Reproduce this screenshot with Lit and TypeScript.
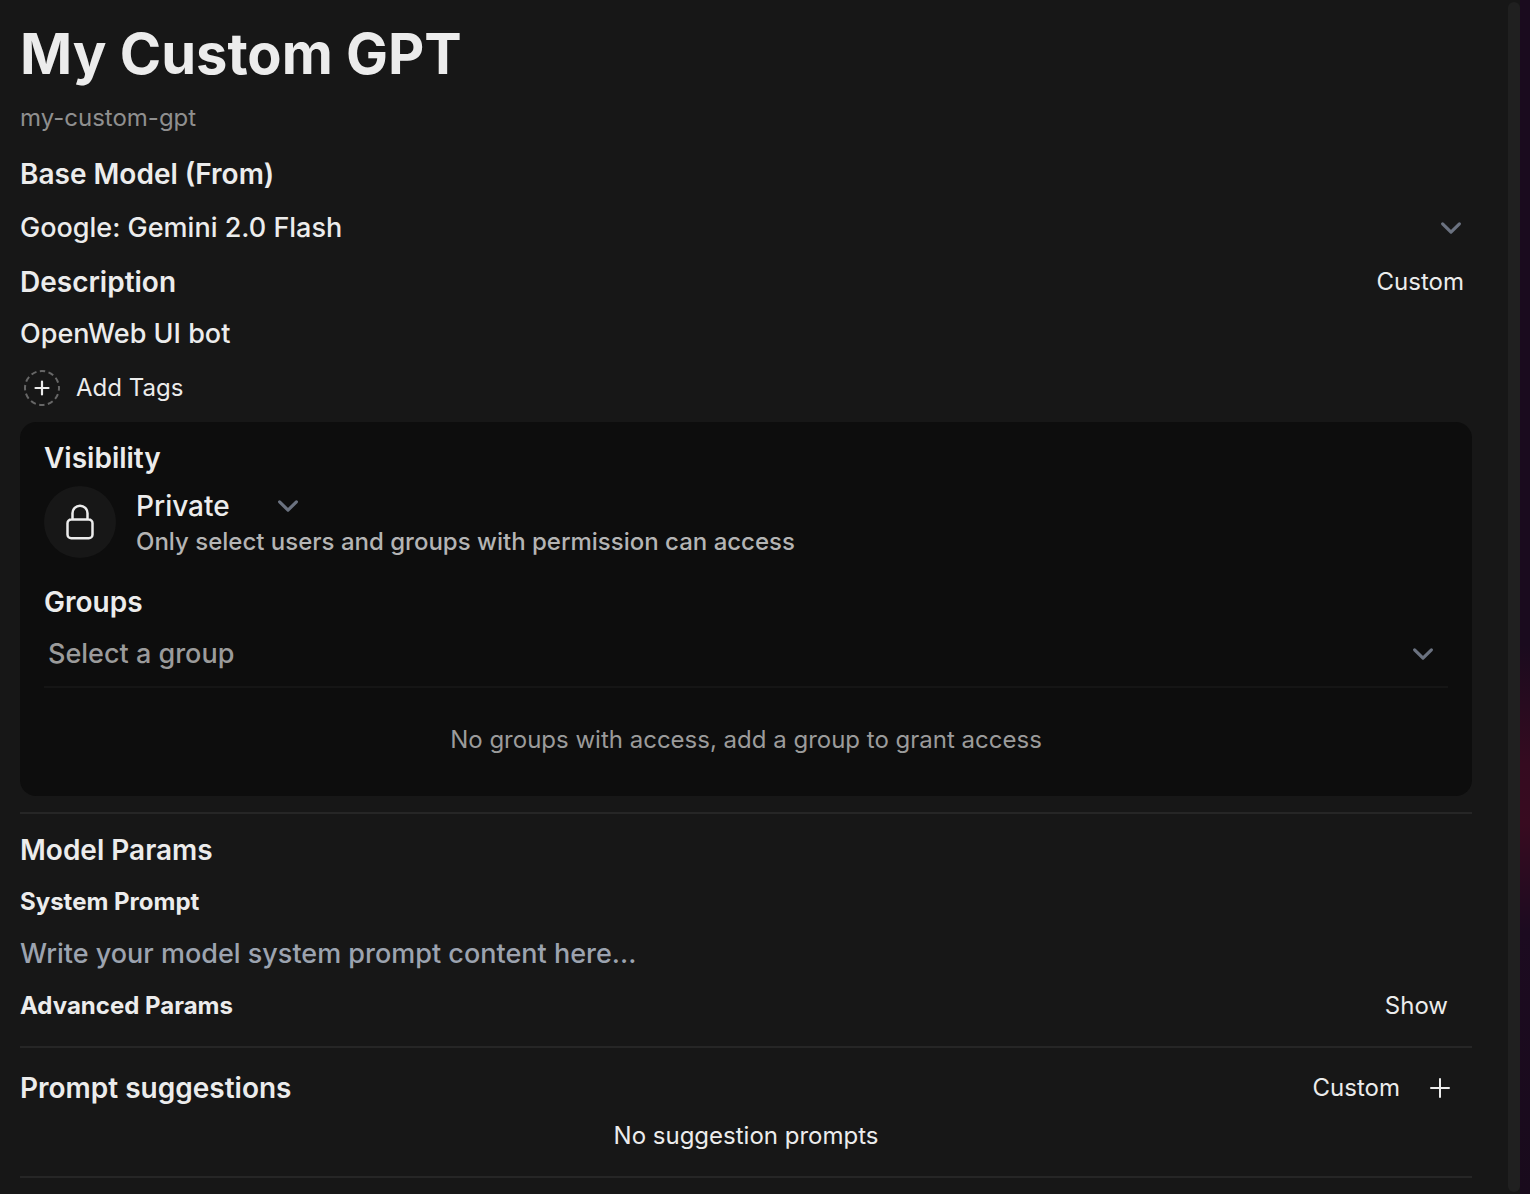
import { LitElement, html, css, svg } from "lit";
import { customElement, state } from "lit/decorators.js";

const chevron = html`<svg class="chevron" viewBox="0 0 20 20" aria-hidden="true">
  ${svg`<path d="M6 8l4 4 4-4" fill="none" stroke="currentColor" stroke-width="1.5" stroke-linecap="round" stroke-linejoin="round"/>`}
</svg>`;

@customElement("app-root")
export class AppRoot extends LitElement {
  static styles = css`
    :host {
      display: block;
      min-height: 100vh;
      background: linear-gradient(
        #1a0b1e 0%, #1a0b1e 54%, #350b20 64%, #380b20 69%, #1c0b20 78%, #190b1c 100%
      );
      color: #ececec;
      font-family: Inter, "Liberation Sans", sans-serif;
      font-size: 27px;
      font-weight: 450;
      line-height: 40px;
    }
    * { box-sizing: border-box; }
    h1, h2, h3, p { margin: 0; }
    input, textarea, select, button {
      font: inherit;
      color: inherit;
      background: none;
      border: 0;
      border-radius: 0;
      padding: 0;
      margin: 0;
      outline: none;
    }
    button { cursor: pointer; }
    .page {
      display: flex;
      min-height: 100vh;
      margin-right: 10px;
      background: #171717;
    }
    .editor {
      flex: 1;
      min-width: 0;
      display: flex;
      flex-direction: column;
      padding: 18px 36px 14px 20px;
    }
    .track {
      width: 12px;
      margin: 2px 0;
      border-radius: 6px;
      background: #202020;
    }
    .title {
      width: 100%;
      height: 72px;
      font-size: 56px;
      font-weight: 650;
      line-height: 72px;
    }
    .slug {
      width: 100%;
      height: 32px;
      margin: 12px 0 20px;
      color: #8f8f8f;
    }
    .small { font-size: 24px; line-height: 32px; font-weight: 400; }
    .heading { font-size: 28px; line-height: 40px; font-weight: 600; }
    .subheading { font-size: 24px; line-height: 32px; font-weight: 650; }
    .row {
      display: flex;
      align-items: center;
      justify-content: space-between;
    }
    .field { display: grid; align-items: center; }
    .field > * { grid-area: 1 / 1; }
    .select {
      appearance: none;
      width: 100%;
      height: 40px;
    }
    .chevron {
      justify-self: end;
      width: 42px;
      height: 42px;
      margin: -1px 0;
      color: #6b7280;
      pointer-events: none;
    }
    .base { margin: 14px 0; }
    .area {
      display: block;
      width: 100%;
      height: 40px;
      margin: 12px 0;
      resize: none;
      overflow: hidden;
    }
    .area::placeholder { color: #9ca3af; opacity: 1; }
    .toggle { padding: 0 8px; }
    .toggle.inset { padding: 0 24px; }
    .tags {
      display: flex;
      align-items: center;
      gap: 16px;
      margin: 4px 0 16px 4px;
      align-self: flex-start;
    }
    .ring { display: block; width: 36px; height: 36px; }
    .panel {
      padding: 16px 24px 40px;
      border-radius: 16px;
      background: #0d0d0d;
    }
    .access { display: flex; gap: 20px; margin: 8px 0 24px; }
    .badge {
      display: grid;
      place-items: center;
      width: 72px;
      height: 72px;
      border-radius: 50%;
      background: #171717;
    }
    .lock { width: 40px; height: 40px; }
    .mode { width: 173px; font-size: 28px; font-weight: 500; }
    .mode .chevron { margin: -1px 0; }
    .hint { color: #b4b4b4; font-weight: 500; }
    .group { margin: 12px 0; padding: 0 4px; color: #9b9b9b; }
    .line { width: 100%; height: 2px; margin: 0; border: 0; background: #262626; }
    .line.faint { background: #151515; }
    .line.spaced { margin: 16px 0; }
    .empty { text-align: center; }
    .empty.muted { margin-top: 36px; color: #9b9b9b; }
    .prompt-label { display: block; margin: 16px 0; }
    .area.prompt { margin: 0 0 16px; }
    .advanced { margin-bottom: 24px; }
    .suggestions { margin: 20px 0 12px; }
    .actions { display: flex; align-items: center; }
    .plus { display: grid; place-items: center; width: 32px; height: 40px; margin: 0 16px 0 0; }
    .plus svg { width: 24px; height: 24px; }
    .last { margin-top: 24px; }
  `;

  @state() private name = "My Custom GPT";
  @state() private description = "OpenWeb UI bot";

  render() {
    return html`
      <div class="page">
        <main class="editor">
          <input class="title" aria-label="Model name" .value=${this.name}
            @input=${(e: Event) => (this.name = (e.target as HTMLInputElement).value)} />
          <input class="slug small" aria-label="Model ID" value="my-custom-gpt" />

          <label class="heading" for="base">Base Model (From)</label>
          <div class="field base">
            <select class="select" id="base"><option>Google: Gemini 2.0 Flash</option></select>
            ${chevron}
          </div>

          <div class="row">
            <label class="heading" for="description">Description</label>
            <button class="toggle small" type="button">Custom</button>
          </div>
          <textarea class="area" id="description" rows="1" .value=${this.description}
            @input=${(e: Event) => (this.description = (e.target as HTMLTextAreaElement).value)}></textarea>

          <button class="tags small" type="button">
            <svg class="ring" viewBox="0 0 36 36" fill="none" aria-hidden="true">
              <circle cx="18" cy="18" r="17" stroke="#676767" stroke-width="2" stroke-dasharray="5.5 3.4" stroke-dashoffset="2.75"/>
              <path d="M18 11.5v13M11.5 18h13" stroke="#ececec" stroke-width="2.2" stroke-linecap="round"/>
            </svg>
            <span>Add Tags</span>
          </button>

          <section class="panel">
            <h2 class="heading"><label for="visibility">Visibility</label></h2>
            <div class="access">
              <div class="badge">
                <svg class="lock" viewBox="0 0 24 24" fill="none" stroke="currentColor" stroke-width="1.5" stroke-linecap="round" stroke-linejoin="round" aria-hidden="true">
                  <path d="M16.5 10.5V6.75a4.5 4.5 0 1 0-9 0v3.75m-.75 11.25h10.5a2.25 2.25 0 0 0 2.25-2.25v-6.75a2.25 2.25 0 0 0-2.25-2.25H6.75a2.25 2.25 0 0 0-2.25 2.25v6.75a2.25 2.25 0 0 0 2.25 2.25Z"/>
                </svg>
              </div>
              <div>
                <div class="field mode">
                  <select class="select" id="visibility"><option>Private</option><option>Public</option></select>
                  ${chevron}
                </div>
                <p class="hint small">Only select users and groups with permission can access</p>
              </div>
            </div>
            <h2 class="heading"><label for="group">Groups</label></h2>
            <div class="field group">
              <select class="select" id="group"><option>Select a group</option></select>
              ${chevron}
            </div>
            <hr class="line faint" />
            <p class="empty muted small">No groups with access, add a group to grant access</p>
          </section>

          <hr class="line spaced" />
          <h2 class="heading">Model Params</h2>
          <label class="prompt-label subheading" for="prompt">System Prompt</label>
          <textarea class="area prompt" id="prompt" rows="1" placeholder="Write your model system prompt content here..."></textarea>
          <div class="row advanced">
            <h3 class="subheading">Advanced Params</h3>
            <button class="toggle inset small" type="button">Show</button>
          </div>
          <hr class="line" />

          <div class="row suggestions">
            <h2 class="heading">Prompt suggestions</h2>
            <div class="actions">
              <button class="toggle inset small" type="button">Custom</button>
              <button class="plus" type="button" aria-label="Add suggestion">
                <svg viewBox="0 0 24 24" aria-hidden="true">
                  <path d="M12 3v18M3 12h18" stroke="#ececec" stroke-width="2" stroke-linecap="round"/>
                </svg>
              </button>
            </div>
          </div>
          <p class="empty small">No suggestion prompts</p>
          <hr class="line last" />
        </main>
        <div class="track"></div>
      </div>
    `;
  }
}
